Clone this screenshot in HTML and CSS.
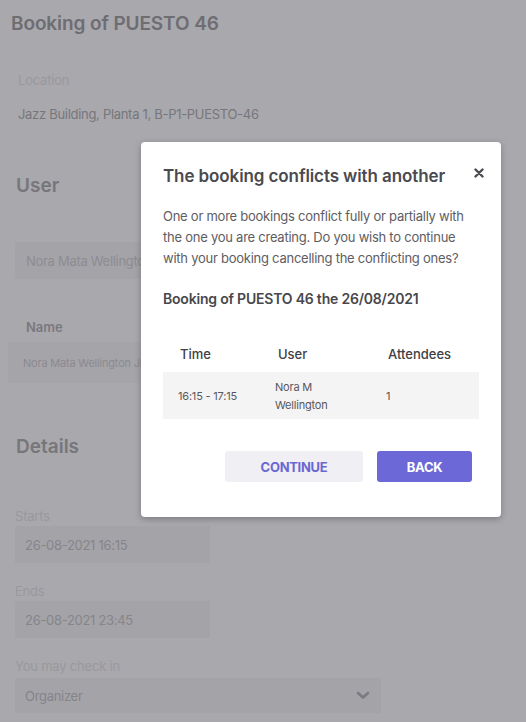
FILE: index.html
```html
<!DOCTYPE html>
<html lang="en">
<head>
<meta charset="utf-8">
<title>Booking of PUESTO 46</title>
<link rel="stylesheet" href="styles.css">
</head>
<body>
<main class="page">
  <h1 class="page-title">Booking of PUESTO 46</h1>
  <div class="field-label loc-label">Location</div>
  <div class="loc-value">Jazz Building, Planta 1, B-P1-PUESTO-46</div>

  <h2 class="section-title user-title">User</h2>
  <div class="input user-input">Nora Mata Wellington Jiménez</div>
  <div class="name-head">Name</div>
  <div class="name-row">Nora Mata Wellington Jiménez</div>

  <h2 class="section-title details-title">Details</h2>
  <div class="field-label starts-label">Starts</div>
  <div class="input date-input">26-08-2021 16:15</div>
  <div class="field-label">Ends</div>
  <div class="input date-input">26-08-2021 23:45</div>
  <div class="field-label">You may check in</div>
  <div class="input select-input">
    <span>Organizer</span>
    <svg class="chev" width="14" height="9" viewBox="0 0 14 9"><path d="M2 2l5 4.5L12 2" fill="none" stroke="#7b7a80" stroke-width="2.6" stroke-linecap="round" stroke-linejoin="round"/></svg>
  </div>
</main>

<div class="modal">
  <div class="modal-head">
    <h3 class="modal-title">The booking conflicts with another</h3>
    <svg class="close" width="10" height="10" viewBox="0 0 10 10" aria-label="Close"><path d="M1.5 1.5l7 7M8.5 1.5l-7 7" stroke="#4a4a50" stroke-width="2.4" stroke-linecap="round"/></svg>
  </div>
  <p class="modal-text">One or more bookings conflict fully or partially with the one you are creating. Do you wish to continue with your booking cancelling the conflicting ones?</p>
  <div class="modal-sub">Booking of PUESTO 46 the 26/08/2021</div>
  <div class="grid head">
    <div class="th th1">Time</div>
    <div class="th th2">User</div>
    <div class="th th3">Attendees</div>
  </div>
  <div class="grid row">
    <div class="td">16:15 - 17:15</div>
    <div class="td td2">Nora M Wellington</div>
    <div class="td">1</div>
  </div>
  <div class="actions">
    <button class="btn btn-continue">CONTINUE</button>
    <button class="btn btn-back">BACK</button>
  </div>
</div>
</body>
</html>
```
FILE: styles.css
```css
html, body {
  margin: 0;
  padding: 0;
}
body {
  background: #a9a8ad;
  font-family: Inter, "Noto Sans", sans-serif;
  width: 526px;
  height: 722px;
  overflow: hidden;
  position: relative;
}
.page {
  padding: 12px 0 0 0;
}
.page-title {
  margin: 0 0 0 11px;
  font-size: 19px;
  line-height: 24px;
  font-weight: 600;
  color: #6e6d72;
  letter-spacing: -0.1px;
}
.field-label {
  font-size: 13px;
  line-height: 18px;
  color: #99989d;
  margin: 19px 0 0 15px;
  letter-spacing: -0.2px;
}
.loc-label {
  margin: 35px 0 0 18px;
}
.loc-value {
  font-size: 13px;
  line-height: 18px;
  color: #77767b;
  margin: 16px 0 0 18px;
  letter-spacing: -0.3px;
}
.section-title {
  margin: 51px 0 0 16px;
  font-size: 19px;
  line-height: 24px;
  font-weight: 600;
  color: #77767b;
}
.details-title {
  margin-top: 52px;
}
.input {
  background: #a4a3a8;
  width: 195px;
  box-sizing: border-box;
  margin-left: 15px;
  padding: 0 10px;
  font-size: 13px;
  color: #86858a;
  display: flex;
  align-items: center;
  white-space: nowrap;
  overflow: hidden;
  letter-spacing: -0.3px;
}
.user-input {
  margin-top: 44px;
  height: 37px;
  width: 126px;
  padding-left: 11px;
  padding-right: 0;
  color: #8d8c91;
}
.name-head {
  margin: 39px 0 0 26px;
  font-size: 13px;
  line-height: 18px;
  font-weight: 600;
  color: #7a797e;
}
.name-row {
  margin: 6px 0 0 8px;
  height: 41px;
  width: 133px;
  overflow: hidden;
  background: #a5a4a9;
  padding-left: 15px;
  box-sizing: border-box;
  display: flex;
  align-items: center;
  font-size: 11px;
  color: #8b8a8f;
  letter-spacing: -0.2px;
  white-space: nowrap;
}
.starts-label {
  margin-top: 48px;
}
.date-input {
  height: 37px;
  margin-top: 1px;
}
.select-input {
  width: 366px;
  height: 35px;
  margin-top: 3px;
  justify-content: space-between;
  padding-right: 11px;
  color: #85848a;
}
.chev {
  display: block;
}

/* Modal */
.modal {
  position: absolute;
  left: 141px;
  top: 142px;
  width: 360px;
  box-sizing: border-box;
  background: #ffffff;
  border-radius: 4px;
  box-shadow: 0 2px 6px rgba(40, 40, 50, 0.35);
  padding: 22px 22px 35px 22px;
}
.modal-head {
  display: flex;
  justify-content: space-between;
  align-items: center;
}
.modal-title {
  margin: 0;
  font-size: 17px;
  line-height: 24px;
  font-weight: 600;
  color: #4a4a4f;
  letter-spacing: -0.1px;
}
.close {
  display: block;
  margin-right: -5px;
  margin-top: -7px;
}
.modal-text {
  margin: 18px 0 0 0;
  font-size: 13px;
  line-height: 21px;
  color: #5e5d62;
  letter-spacing: -0.25px;
}
.modal-sub {
  margin-top: 20px;
  font-size: 14px;
  line-height: 20px;
  font-weight: 600;
  color: #48474c;
  letter-spacing: -0.2px;
}
.grid {
  display: grid;
  grid-template-columns: 97px 111px 1fr;
}
.head {
  margin-top: 27px;
  height: 36px;
  align-items: center;
}
.th {
  font-size: 13px;
  font-weight: 500;
  color: #404044;
  padding-left: 17px;
}
.th2 {
  padding-left: 18px;
}
.th3 {
  padding-left: 17px;
}
.row {
  background: #f4f4f5;
  height: 47px;
  align-items: center;
}
.td {
  font-size: 11px;
  line-height: 18px;
  color: #58575c;
  padding-left: 15px;
  letter-spacing: -0.2px;
}
.td2 {
  padding-right: 30px;
}
.actions {
  margin-top: 32px;
  display: flex;
  justify-content: flex-end;
  gap: 14px;
  padding-right: 7px;
}
.btn {
  height: 31px;
  border: none;
  border-radius: 3px;
  font-family: Inter, "Noto Sans", sans-serif;
  font-size: 13px;
  font-weight: 700;
  letter-spacing: -0.3px;
  cursor: pointer;
}
.btn-continue {
  width: 138px;
  background: #efeff4;
  color: #6b67d1;
}
.btn-back {
  width: 95px;
  background: #6c68d7;
  color: #ffffff;
}
```
